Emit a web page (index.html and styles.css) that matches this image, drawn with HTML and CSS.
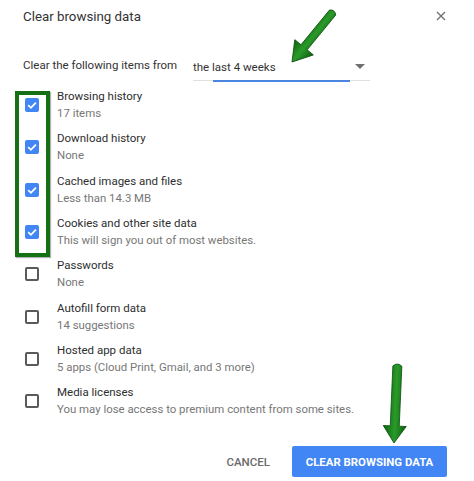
FILE: index.html
```html
<!DOCTYPE html>
<html>
<head>
<meta charset="utf-8">
<link rel="stylesheet" href="styles.css">
</head>
<body>
<div class="dialog">
  <div class="header">
    <div class="title">Clear browsing data</div>
    <svg class="close" width="10" height="10" viewBox="0 0 10 10"><path d="M1 1L9 9M9 1L1 9" stroke="#6f6f6f" stroke-width="1.3"/></svg>
  </div>
  <div class="range">
    <span class="range-label">Clear the following items from</span>
    <div class="select">
      <span class="select-text">the last 4 weeks</span>
      <svg class="caret" width="10" height="5" viewBox="0 0 10 5"><path d="M0 0H10L5 5Z" fill="#6f6f6f"/></svg>
      <div class="select-focus"></div>
    </div>
  </div>
  <div class="items">
    <div class="item"><span class="box checked"><svg viewBox="0 0 14 14" width="14" height="14"><path d="M3.2 7.2L5.9 9.8L10.9 4.6" fill="none" stroke="#fff" stroke-width="1.8"/></svg></span><div class="txt"><div class="lbl">Browsing history</div><div class="sub">17 items</div></div></div>
    <div class="item"><span class="box checked"><svg viewBox="0 0 14 14" width="14" height="14"><path d="M3.2 7.2L5.9 9.8L10.9 4.6" fill="none" stroke="#fff" stroke-width="1.8"/></svg></span><div class="txt"><div class="lbl">Download history</div><div class="sub">None</div></div></div>
    <div class="item"><span class="box checked"><svg viewBox="0 0 14 14" width="14" height="14"><path d="M3.2 7.2L5.9 9.8L10.9 4.6" fill="none" stroke="#fff" stroke-width="1.8"/></svg></span><div class="txt"><div class="lbl">Cached images and files</div><div class="sub">Less than 14.3 MB</div></div></div>
    <div class="item"><span class="box checked"><svg viewBox="0 0 14 14" width="14" height="14"><path d="M3.2 7.2L5.9 9.8L10.9 4.6" fill="none" stroke="#fff" stroke-width="1.8"/></svg></span><div class="txt"><div class="lbl">Cookies and other site data</div><div class="sub">This will sign you out of most websites.</div></div></div>
    <div class="item"><span class="box"></span><div class="txt"><div class="lbl">Passwords</div><div class="sub">None</div></div></div>
    <div class="item"><span class="box"></span><div class="txt"><div class="lbl">Autofill form data</div><div class="sub">14 suggestions</div></div></div>
    <div class="item"><span class="box"></span><div class="txt"><div class="lbl">Hosted app data</div><div class="sub">5 apps (Cloud Print, Gmail, and 3 more)</div></div></div>
    <div class="item"><span class="box"></span><div class="txt"><div class="lbl">Media licenses</div><div class="sub">You may lose access to premium content from some sites.</div></div></div>
  </div>
  <div class="footer">
    <span class="btn-cancel">CANCEL</span>
    <span class="btn-primary">CLEAR BROWSING DATA</span>
  </div>
</div>
<div class="highlight"></div>
<svg class="arrows" width="474" height="481" viewBox="0 0 474 481">
  <defs>
    <linearGradient id="g1" x1="0" y1="0" x2="1" y2="0">
      <stop offset="0" stop-color="#0c620c"/>
      <stop offset="0.5" stop-color="#2a9a2a"/>
      <stop offset="1" stop-color="#0c620c"/>
    </linearGradient>
  </defs>
  <g transform="translate(292 62) rotate(39.4)">
    <path d="M-4 -64 Q0 -68 4 -64 L4 -19 L12 -19 L0 0 L-12 -19 L-4 -19 Z" fill="url(#g1)" stroke="#0a4f0a" stroke-width="0.8" stroke-linejoin="round"/>
  </g>
  <g transform="translate(394 443) rotate(2.5)">
    <path d="M-4.5 -77 Q0 -81 4.5 -77 L4.5 -17 L11.5 -17 L0 0 L-11.5 -17 L-4.5 -17 Z" fill="url(#g1)" stroke="#0a4f0a" stroke-width="0.8" stroke-linejoin="round"/>
  </g>
</svg>
</body>
</html>
```
FILE: styles.css
```css
html, body {
  margin: 0;
  padding: 0;
  background: #fff;
}
body {
  width: 474px;
  height: 481px;
  position: relative;
  overflow: hidden;
  font-family: Roboto, "Liberation Sans", sans-serif;
  color: #333;
}
.dialog {
  padding: 0 0 0 23px;
}
.header {
  display: flex;
  align-items: center;
  justify-content: space-between;
  height: 32px;
  padding-right: 28px;
}
.title {
  font-size: 13.3px;
  color: #333;
}
.close {
  display: block;
}
.range {
  display: flex;
  align-items: center;
  margin-top: 18px;
  height: 30px;
  font-size: 11.5px;
}
.range-label {
  color: #333;
  width: 170px;
}
.select {
  position: relative;
  display: flex;
  align-items: center;
  justify-content: space-between;
  width: 177px;
  height: 26px;
  border-bottom: 1px solid #e0e0e0;
  margin-top: 4px;
}
.select-text {
  color: #333;
}
.caret {
  margin-right: 5px;
}
.select-focus {
  position: absolute;
  left: 20px;
  width: 137px;
  bottom: -2px;
  height: 2px;
  background: #4a86e0;
}
.items {
  margin-top: 4px;
  margin-left: 2px;
}
.item {
  display: flex;
  align-items: center;
  height: 42.3px;
}
.box {
  width: 14px;
  height: 14px;
  box-sizing: border-box;
  border: 2px solid #5a5a5a;
  border-radius: 2px;
  margin-right: 18px;
  flex: none;
}
.box.checked {
  border: none;
  background: #4285f4;
}
.box svg {
  display: block;
}
.txt {
  display: flex;
  flex-direction: column;
}
.lbl {
  font-size: 11.5px;
  line-height: 17px;
  color: #2e2e2e;
}
.sub {
  font-size: 11.4px;
  line-height: 17px;
  color: #777;
}
.footer {
  display: flex;
  justify-content: flex-end;
  align-items: center;
  margin-top: 24px;
  padding-right: 27px;
  gap: 22px;
}
.btn-cancel {
  font-size: 11.5px;
  font-weight: 500;
  color: #6b6b6b;
}
.btn-primary {
  display: inline-flex;
  align-items: center;
  justify-content: center;
  width: 155px;
  height: 31px;
  background: #4285f4;
  color: #fff;
  font-size: 11.4px;
  font-weight: 700;
  border-radius: 2px;
}
.highlight {
  position: absolute;
  left: 15px;
  top: 91px;
  width: 35px;
  height: 166px;
  box-sizing: border-box;
  border: 4px solid #157015;
  box-shadow: 1px 1px 1px rgba(0,0,0,0.3);
}
.arrows {
  position: absolute;
  left: 0;
  top: 0;
  pointer-events: none;
}
```
